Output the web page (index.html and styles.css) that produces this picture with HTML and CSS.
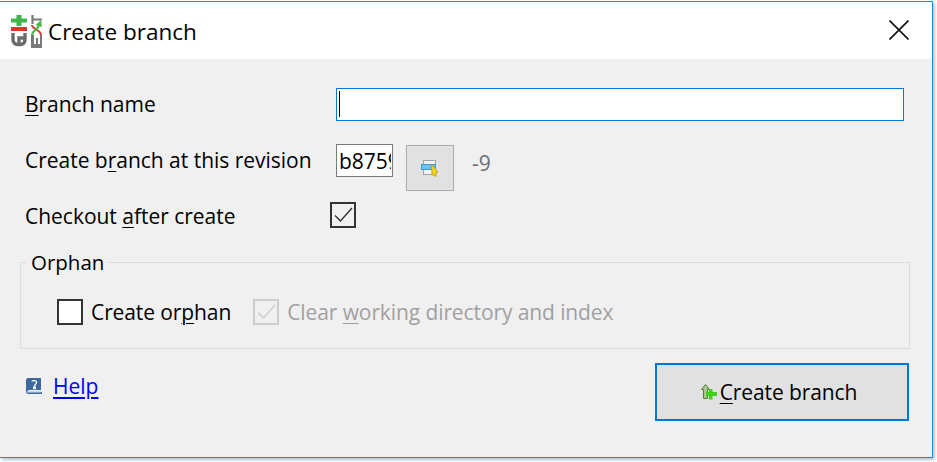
FILE: index.html
```html
<!DOCTYPE html>
<html lang="en">
<head>
<meta charset="utf-8">
<title>Create branch</title>
<link rel="stylesheet" href="styles.css">
</head>
<body>
<div class="window">
  <header class="titlebar">
    <svg class="app-icon" width="32" height="33" viewBox="0 0 32 33">
      <path d="M5.500 0h5v3.500H16v4h-5.500V11h-5V7.500H0v-4h5.500z" fill="#3fb54a"/>
      <rect x="0" y="12" width="16" height="4" fill="#d9352c"/>
      <path d="M2 18v7a4.500 4.500 0 0 0 4.500 4.500h3A4.500 4.500 0 0 0 14 25v-7M8 30v-7h6" fill="none" stroke="#6b6b6b" stroke-width="3.400"/>
      <path d="M21.500 0v9M21.500 4.500H31" fill="none" stroke="#7a7a7a" stroke-width="2.200"/>
      <path d="M21 10c0 4 9 5 9 10" fill="none" stroke="#d9453c" stroke-width="2.200"/>
      <path d="M21 20c0-5 7-5 7-11" fill="none" stroke="#4db848" stroke-width="2.200"/>
      <path d="M24.500 10L30 5l1 7z" fill="#4db848"/>
      <path d="M20 20h3v9h2v-6h2v6h2v-9h2v13H20z" fill="#7a7a7a"/>
    </svg>
    <span class="title">Create branch</span>
    <svg class="close" width="20" height="20" viewBox="0 0 20 20">
      <path d="M0.500 0.500l19 19M19.500 0.500l-19 19" stroke="#111" stroke-width="1.600" fill="none"/>
    </svg>
  </header>

  <main class="content">
    <div class="row row-name">
      <label class="label"><u>B</u>ranch name</label>
      <div class="input wide"><span class="caret"></span></div>
    </div>

    <div class="row row-rev">
      <label class="label">Create b<u>r</u>anch at this revision</label>
      <div class="input short"><span class="clip">b8759c</span></div>
      <button class="icon-btn" type="button">
        <svg width="18" height="17" viewBox="0 0 18 17">
          <rect x="2.500" y="0.500" width="12" height="14" fill="#f2f2f2" stroke="#a3a3a3"/>
          <rect x="0.500" y="4.500" width="14" height="5" fill="#6cc0f2" stroke="#3c9bdb"/>
          <path d="M10.500 4l6.500 8-2 .5V16.500l-4-2z" fill="#f3d21b" stroke="#b89a10" stroke-width=".8"/>
        </svg>
      </button>
      <span class="count">-9</span>
    </div>

    <div class="row row-check">
      <label class="label">Checkout <u>a</u>fter create</label>
      <span class="check on">
        <svg width="20" height="20" viewBox="0 0 20 20"><path d="M2 10.500l5.500 5.500L19 3" fill="none" stroke="#333" stroke-width="1.400"/></svg>
      </span>
    </div>

    <fieldset class="group">
      <legend class="legend">Orphan</legend>
      <div class="group-row">
        <span class="check"></span>
        <span class="opt">Create or<u>p</u>han</span>
        <span class="check disabled">
          <svg width="20" height="20" viewBox="0 0 20 20"><path d="M2 10.500l5.500 5.500L19 3" fill="none" stroke="#ccc" stroke-width="1.400"/></svg>
        </span>
        <span class="opt muted">Clear <u>w</u>orking directory and index</span>
      </div>
    </fieldset>

    <footer class="footer">
      <div class="help">
        <svg width="16" height="16" viewBox="0 0 16 16">
          <path d="M2 0h13v12H3.500C2.500 12 2 12.500 2 13s.5 1 1.500 1H16v2H2.500C1 16 0 15 0 13.500V2c0-1 1-2 2-2z" fill="#3f68a0"/>
          <rect x="1" y="13" width="14" height="1.500" fill="#c9d6e6"/>
          <path d="M6 3.500c0-1 4.500-1.500 4.500 1 0 2-2 1.800-2 3.500M7.700 9h1.600v1.600H7.700z" fill="none" stroke="#fff" stroke-width="1.300"/>
        </svg>
        <a class="help-link" href="#">Help</a>
      </div>
      <button class="primary" type="button">
        <svg width="16" height="16" viewBox="0 0 16 16">
          <path d="M4.500 0.500L0.500 5.500h2v9h4v-9h2z" fill="#a9c78f" stroke="#567a36"/>
          <path d="M8 5h3.500v3H16v4h-4.500v3.500H8V12H5V8h3z" fill="#3ed01a"/>
        </svg>
        <span><u>C</u>reate branch</span>
      </button>
    </footer>
  </main>
</div>
</body>
</html>
```
FILE: styles.css
```css
* { box-sizing: border-box; }
html, body { margin: 0; padding: 0; background: #fff; }
body { width: 937px; height: 462px; overflow: hidden; font-family: "Open Sans", "Noto Sans", sans-serif; font-size: 21px; color: #000; }
u { text-underline-offset: 3px; text-decoration-thickness: 1px; }
.window { width: 933px; height: 457px; margin-top: 1px; border: 1px solid #2b86d0; border-left: 0; background: #f0f0f0; box-shadow: 2px 2px 3px rgba(0,0,0,.25); display: flex; flex-direction: column; }
.titlebar { height: 57px; background: #fff; display: flex; align-items: center; padding: 0 23px 0 11px; }
.app-icon { flex: none; margin-top: 2px; margin-right: 5px; }
.title { font-size: 22.500px; flex: 1; margin-top: 1px; }
.close { flex: none; margin-top: -1px; }
.content { flex: 1; padding-left: 25px; display: flex; flex-direction: column; }
.row { display: flex; align-items: center; }
.label { width: 311px; flex: none; letter-spacing: -.02px; }
.row-name { margin-top: 28px; height: 34px; }
.input { background: #fff; border: 1px solid #7a7a7a; height: 33px; display: flex; align-items: center; overflow: hidden; }
.wide { width: 568px; border-color: #0a78d4; padding-left: 2px; height: 33px; }
.caret { width: 1px; height: 26px; background: #000; }
.short { width: 57px; padding-left: 2px; }
.clip { white-space: nowrap; overflow: hidden; width: 52px; }
.row-rev { margin-top: 23px; height: 47px; align-items: flex-start; }
.row-rev .label { margin-top: 2px; }
.icon-btn { width: 48px; height: 46px; margin: 1px 0 0 13px; background: #e1e1e1; border: 1px solid #adadad; padding: 0; display: flex; align-items: center; justify-content: center; }
.count { color: #6d6d6d; margin: 5px 0 0 18px; }
.row-check { margin-top: 11px; height: 26px; }
.row-check .label { width: 305px; padding-top: 2px; }
.check { width: 26px; height: 26px; flex: none; border: 2px solid #333; background: #fff; display: flex; align-items: center; justify-content: center; }
.check.on { background: transparent; }
.check.disabled { border-color: #ccc; background: transparent; }
.group { margin: 20px 0 0 -5px; padding: 0; width: 890px; height: 101px; border: 1px solid #dcdcdc; }
.legend { margin-left: 6px; padding: 0 4px; line-height: 28px; font-size: 20.500px; }
.group-row { display: flex; align-items: center; padding-left: 36px; margin-top: 22px; }
.opt { margin-left: 8px; white-space: nowrap; letter-spacing: -.1px; }
.check + .opt { margin-right: 22px; }
.muted { color: #a0a0a0; margin-right: 0; }
.footer { display: flex; justify-content: space-between; margin-top: 14px; }
.help { display: flex; align-items: center; height: 46px; padding-left: 1px; gap: 11px; }
.help-link { color: #0000ff; text-underline-offset: 3px; }
.primary { width: 254px; height: 58px; margin-right: 23px; background: #e1e1e1; border: 2px solid #0078d7; font: inherit; color: #000; display: flex; align-items: center; justify-content: center; gap: 3px; padding: 0 6px 0 0; }
.primary span { letter-spacing: -.1px; }
```
